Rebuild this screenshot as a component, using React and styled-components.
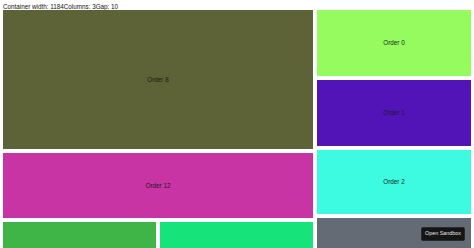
import React from 'react';
import styled, { createGlobalStyle } from 'styled-components';

const GlobalStyles = createGlobalStyle`
  html, body {
    margin: 0;
    padding: 0;
    overflow: hidden;
    background: #fff;
  }

  body {
    font-family: "Liberation Sans", Arial, sans-serif;
    font-size: 6.3px;
    color: #111;
  }
`;

const Page = styled.div`
  padding: 0 3px;
`;

const Info = styled.div`
  line-height: 7.3px;
  padding-top: 2.7px;
  white-space: nowrap;
`;

const Board = styled.div`
  display: flex;
  gap: 4px;
  align-items: flex-start;
`;

const Column = styled.div`
  display: flex;
  flex-direction: column;
  gap: 4px;
  width: ${props => props.$width}px;
  flex-shrink: 0;
`;

const Row = styled.div`
  display: flex;
  gap: 4px;
`;

const Tile = styled.div`
  flex: ${props => (props.$grow ? '1 1 0' : '0 0 auto')};
  height: ${props => props.$height}px;
  background: ${props => props.$color};
  display: flex;
  align-items: center;
  justify-content: center;
  color: #1a1a1a;
`;

const SandboxButton = styled.button.attrs({
  type: 'button'
})`
  position: fixed;
  right: 9px;
  bottom: 7px;
  width: 44px;
  height: 14px;
  padding: 0;
  border: 1px solid #2a2a2a;
  border-radius: 2px;
  background: #151515;
  color: #e8e8e8;
  font-family: "Liberation Sans", Arial, sans-serif;
  font-size: 5.4px;
  line-height: 1;
`;

const main = [
  { order: 8, height: 139, color: '#5d6337' },
  { order: 12, height: 65, color: '#c934a5' }
];

const bottom = [
  { order: 5, height: 26, color: '#3fb447' },
  { order: 7, height: 26, color: '#17e37b' }
];

const side = [
  { order: 0, height: 66, color: '#95fb5f', label: true },
  { order: 1, height: 66, color: '#5314b7', label: true },
  { order: 2, height: 64, color: '#3dfbe0', label: true },
  { order: 3, height: 30, color: '#646b75' }
];

export default function App() {
  return (
    <Page>
      <GlobalStyles />
      <Info>Container width: 1184Columns: 3Gap: 10</Info>

      <Board>
        <Column $width={310}>
          {main.map(item => (
            <Tile key={item.order} $height={item.height} $color={item.color}>
              Order {item.order}
            </Tile>
          ))}
          <Row>
            {bottom.map(item => (
              <Tile key={item.order} $grow $height={item.height} $color={item.color} />
            ))}
          </Row>
        </Column>

        <Column $width={154}>
          {side.map(item => (
            <Tile key={item.order} $height={item.height} $color={item.color}>
              {item.label && `Order ${item.order}`}
            </Tile>
          ))}
        </Column>
      </Board>

      <SandboxButton>Open Sandbox</SandboxButton>
    </Page>
  );
}
